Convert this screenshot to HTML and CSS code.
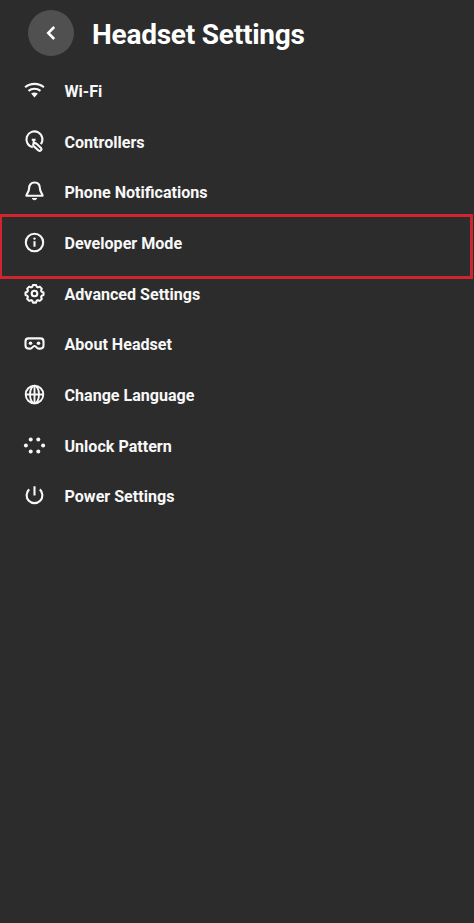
FILE: index.html
```html
<!DOCTYPE html>
<html lang="en">
<head>
<meta charset="utf-8">
<title>Headset Settings</title>
<link rel="stylesheet" href="styles.css">
</head>
<body>
<main class="screen">
  <header class="header">
    <button class="back" aria-label="Back"><svg viewBox="0 0 46 46"><path d="M26.200 17 20.200 23l6 6"/></svg></button>
    <h1 class="title">Headset Settings</h1>
  </header>
  <ul class="list">
    <li class="row"><svg class="icon" viewBox="-.5 -.5 25 25"><path d="M2.600 8.800C8 4.200 16 4.200 21.400 8.800M6 12.400c3.500-2.900 8.500-2.900 12 0"/><path class="solid" d="M8.600 15c2-1.500 4.800-1.500 6.800 0L12 19z"/></svg><span>Wi-Fi</span></li>
    <li class="row"><svg class="icon" viewBox="-.5 -.5 25 25"><path d="M10.300 17.700A8 8 0 1 1 18.300 14.700"/><path d="M9.300 10.200h3.800M11.200 10.600v3.300"/><path d="M11.200 13.900c-1 1.200-.6 2.300.5 3.200l4.300 3.900c1.700 1.300 4-.9 2.500-2.600L14.300 14.500c-1-.9-2.100-1.100-3.100-.6z"/></svg><span>Controllers</span></li>
    <li class="row"><svg class="icon" viewBox="-.5 -.5 25 25"><path d="M12 3c-3.600 0-5.400 2.600-5.400 5.800 0 4.300-2.700 5-2.700 7.500h16.200c0-2.500-2.700-3.200-2.700-7.500C17.400 5.600 15.600 3 12 3z"/><path class="solid" d="M9.300 18.600h5.400c-.5 2.700-4.900 2.700-5.400 0z"/></svg><span>Phone Notifications</span></li>
    <li class="row marked"><svg class="icon" viewBox="-.5 -.5 25 25"><circle cx="12" cy="12" r="8.700"/><path d="M12 10.700v5.500"/><circle class="solid" cx="12" cy="8.100" r="1.200"/></svg><span>Developer Mode</span></li>
    <li class="row"><svg class="icon" viewBox="-.5 -.5 25 25"><path class="gear" d="m10.300 3.200h3.400l.8 2.100 1.200.6 2.200-.8 2.200 2.200-.8 2.200.6 1.200 2.100.8v3l-2.100.8-.6 1.200.8 2.200-2.200 2.200-2.200-.8-1.200.6-.8 2.100h-3.400l-.8-2.100-1.200-.6-2.200.8-2.200-2.200.8-2.200-.6-1.200-2.100-.8v-3l2.100-.8.6-1.200-.8-2.200 2.200-2.200 2.200.8 1.200-.6z"/><circle cx="12" cy="12" r="2.800"/></svg><span>Advanced Settings</span></li>
    <li class="row"><svg class="icon" viewBox="-.5 -.5 25 25"><path d="M6 6.900h12c2 0 3 1 3 3v4.200c0 2-1 3-3 3h-1.900c-1.800 0-2.200-2.600-4.100-2.600s-2.300 2.600-4.100 2.600H6c-2 0-3-1-3-3V9.900c0-2 1-3 3-3z"/><circle class="solid" cx="8" cy="11.800" r="1.800"/><circle class="solid" cx="16" cy="11.800" r="1.800"/></svg><span>About Headset</span></li>
    <li class="row"><svg class="icon thin" viewBox="-.5 -.5 25 25"><circle cx="12" cy="12" r="8.800"/><ellipse cx="12" cy="12" rx="4.500" ry="8.800"/><path d="M12 3.200v17.600M3.200 12h17.600"/></svg><span>Change Language</span></li>
    <li class="row"><svg class="icon dots" viewBox="-.5 -.5 25 25"><circle cx="8.200" cy="6.100" r="2"/><circle cx="15.800" cy="6.100" r="2"/><circle cx="3.400" cy="12" r="2"/><circle cx="20.600" cy="12" r="2"/><circle cx="8.200" cy="17.900" r="2"/><circle cx="15.800" cy="17.900" r="2"/></svg><span>Unlock Pattern</span></li>
    <li class="row"><svg class="icon" viewBox="-.5 -.5 25 25"><path d="M12 2.800v9.200M6.700 5.900a7.900 7.900 0 1 0 10.600 0"/></svg><span>Power Settings</span></li>
  </ul>
</main>
</body>
</html>
```
FILE: styles.css
```css
*, *::after { box-sizing: border-box; }
body {
  margin: 0;
  background: #2c2c2c;
  color: #fff;
  font-family: Roboto, "Liberation Sans", sans-serif;
}
.screen { min-height: 923px; overflow: hidden; }
.header {
  display: flex;
  align-items: center;
  gap: 18.500px;
  padding: 10px 0 0 27.500px;
}
.back {
  width: 46px;
  height: 46px;
  padding: 0;
  border: 0;
  border-radius: 50%;
  background: #505050;
}
.back svg { display: block; fill: none; stroke: #fff; stroke-width: 2.500; }
.title {
  margin: 3px 0 0;
  font-size: 28px;
  line-height: 34px;
  font-weight: 700;
  letter-spacing: -0.230px;
  white-space: nowrap;
}
.list { list-style: none; margin: 10.200px 0 0; padding: 0; }
.row {
  position: relative;
  display: flex;
  align-items: center;
  gap: 17.500px;
  height: 50.670px;
  padding-left: 22px;
  font-size: 16.080px;
  font-weight: 700;
  color: #f8f8f8;
}
.icon {
  flex: none;
  width: 25px;
  height: 25px;
  margin-top: -2px;
  fill: none;
  stroke: #f8f8f8;
  stroke-width: 2.100;
  stroke-linejoin: round;
}
.thin { stroke-width: 1.900; }
.gear {
  transform: translate(12px, 12px) scale(0.9) translate(-12px, -12.700px);
  stroke-width: 2.300;
}
.solid, .dots { fill: #f8f8f8; stroke: none; }
.marked::after {
  content: "";
  position: absolute;
  inset: -4px 1px auto -1px;
  height: 65px;
  border: 3px solid #d0252e;
}
```
